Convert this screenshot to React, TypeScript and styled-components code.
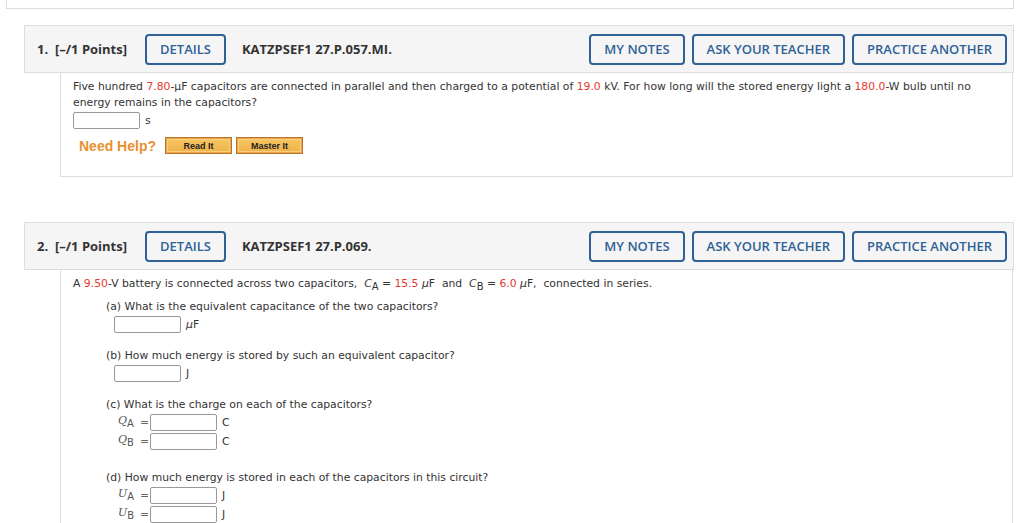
import styled, { createGlobalStyle } from "styled-components";

const GlobalStyle = createGlobalStyle`
  html, body {
    margin: 0;
    padding: 0;
    background: #fff;
  }
`;

const Page = styled.div`
  display: flex;
  flex-direction: column;
  font-family: "DejaVu Sans", Verdana, sans-serif;
  color: #333;
`;

const PrevBox = styled.div`
  height: 8px;
  margin: 0 10px 0 6px;
  border: 1px solid #ddd;
  border-top: none;
  background: #fff;
`;

const Question = styled.section<{ $top: number }>`
  margin: ${(p) => p.$top}px 10px 0 24px;
  display: flex;
  flex-direction: column;
`;

const Header = styled.header`
  height: 46px;
  display: flex;
  align-items: center;
  padding: 0 6px 0 12px;
  background: #f5f5f5;
  border: 1px solid #ddd;
  font-family: "Open Sans", sans-serif;
  font-size: 13px;
  font-weight: 700;
  color: #333;
`;

const Points = styled.span`
  margin-right: 18px;
  white-space: pre;
`;

const Code = styled.span`
  margin-left: 16px;
  flex: 1;
`;

const Actions = styled.div`
  display: flex;
  gap: 7px;
`;

const OutlineButton = styled.button`
  height: 31px;
  padding: 0 13px;
  background: #f5f5f5;
  border: 2px solid #2f6197;
  border-radius: 4px;
  color: #2f6197;
  font-family: "Open Sans", sans-serif;
  font-size: 13px;
  font-weight: 600;
  text-transform: uppercase;
  cursor: pointer;
`;

const Body = styled.div`
  margin-left: 36px;
  margin-right: 1px;
  padding: 6px 20px 0 12px;
  border: 1px solid #ddd;
  border-top: none;
  font-size: 10.8px;
  line-height: 16px;
  color: #333;
`;

const Red = styled.span`
  color: #e8392e;
`;

const AnswerRow = styled.div<{ $indent?: number }>`
  display: flex;
  align-items: center;
  gap: 5px;
  margin-left: ${(p) => p.$indent ?? 0}px;
  height: 19px;
`;

const Field = styled.input`
  width: 67px;
  height: 17px;
  box-sizing: border-box;
  border: 1px solid #999;
  border-radius: 2px;
  padding: 0;
  margin: 0;
  background: #fff;
`;

const Unit = styled.span`
  font-size: 10.8px;
`;

const Italic = styled.i`
  font-style: italic;
`;

const MathVar = styled.span`
  font-family: "DejaVu Serif", serif;
  font-style: italic;
  font-size: 11px;
  color: #555;
`;

const Sub = styled.span`
  font-family: "DejaVu Sans", sans-serif;
  font-style: normal;
  font-size: 10px;
  vertical-align: -3px;
`;

const HelpRow = styled.div`
  display: flex;
  align-items: center;
  gap: 4px;
  margin: 7px 0 0 6px;
  padding-bottom: 22px;
`;

const HelpLabel = styled.span`
  font-family: "Liberation Sans", Arial, sans-serif;
  font-size: 14px;
  font-weight: 700;
  color: #e8902e;
  margin-right: 5px;
`;

const HelpButton = styled.button`
  width: 67px;
  height: 17px;
  padding: 0;
  border: 1px solid #b8752c;
  box-shadow: inset 0 0 0 1px #e8a54a, inset 0 0 0 2px #f7cf7a;
  background: linear-gradient(#f7c765, #f0b048);
  font-family: "Liberation Sans", Arial, sans-serif;
  font-size: 9px;
  font-weight: 700;
  color: #222;
  cursor: pointer;
`;

const Part = styled.div<{ $gap: number }>`
  margin: ${(p) => p.$gap}px 0 0 33px;
`;

const VarRow = styled.div`
  display: flex;
  align-items: center;
  height: 19px;
  margin-left: 12px;
`;

const VarLabel = styled.span`
  width: 22px;
`;

const Eq = styled.span`
  width: 10px;
  color: #666;
`;

const HeaderBar = ({ num, code }: { num: number; code: string }) => (
  <Header>
    <Points>{`${num}.  [–/1 Points]`}</Points>
    <OutlineButton>Details</OutlineButton>
    <Code>{code}</Code>
    <Actions>
      <OutlineButton>My Notes</OutlineButton>
      <OutlineButton>Ask Your Teacher</OutlineButton>
      <OutlineButton>Practice Another</OutlineButton>
    </Actions>
  </Header>
);

const VarField = ({ v, sub, unit }: { v: string; sub: string; unit: string }) => (
  <VarRow>
    <VarLabel>
      <MathVar>
        {v}
        <Sub>{sub}</Sub>
      </MathVar>
    </VarLabel>
    <Eq>=</Eq>
    <Field />
    <Unit style={{ marginLeft: 5 }}>{unit}</Unit>
  </VarRow>
);

export default function App() {
  return (
    <Page>
      <GlobalStyle />
      <PrevBox />

      <Question $top={16}>
        <HeaderBar num={1} code="KATZPSEF1 27.P.057.MI." />
        <Body>
          <div>
            Five hundred <Red>7.80</Red>-μF capacitors are connected in parallel and then charged to a
            potential of <Red>19.0</Red> kV. For how long will the stored energy light a{" "}
            <Red>180.0</Red>-W bulb until no energy remains in the capacitors?
          </div>
          <AnswerRow>
            <Field />
            <Unit>s</Unit>
          </AnswerRow>
          <HelpRow>
            <HelpLabel>Need Help?</HelpLabel>
            <HelpButton>Read It</HelpButton>
            <HelpButton>Master It</HelpButton>
          </HelpRow>
        </Body>
      </Question>

      <Question $top={45}>
        <HeaderBar num={2} code="KATZPSEF1 27.P.069." />
        <Body>
          <div>
            A <Red>9.50</Red>-V battery is connected across two capacitors,&nbsp;{" "}
            <Italic>
              C<Sub>A</Sub>
            </Italic>{" "}
            = <Red>15.5</Red> <Italic>μ</Italic>F&nbsp; and&nbsp;{" "}
            <Italic>
              C<Sub>B</Sub>
            </Italic>{" "}
            = <Red>6.0</Red> <Italic>μ</Italic>F,&nbsp; connected in series.
          </div>
          <Part $gap={4}>
            <div>(a) What is the equivalent capacitance of the two capacitors?</div>
            <AnswerRow $indent={8}>
              <Field />
              <Unit>
                <Italic>μ</Italic>F
              </Unit>
            </AnswerRow>
          </Part>
          <Part $gap={14}>
            <div>(b) How much energy is stored by such an equivalent capacitor?</div>
            <AnswerRow $indent={8}>
              <Field />
              <Unit>J</Unit>
            </AnswerRow>
          </Part>
          <Part $gap={14}>
            <div>(c) What is the charge on each of the capacitors?</div>
            <VarField v="Q" sub="A" unit="C" />
            <VarField v="Q" sub="B" unit="C" />
          </Part>
          <Part $gap={19}>
            <div>(d) How much energy is stored in each of the capacitors in this circuit?</div>
            <VarField v="U" sub="A" unit="J" />
            <VarField v="U" sub="B" unit="J" />
          </Part>
        </Body>
      </Question>
    </Page>
  );
}
